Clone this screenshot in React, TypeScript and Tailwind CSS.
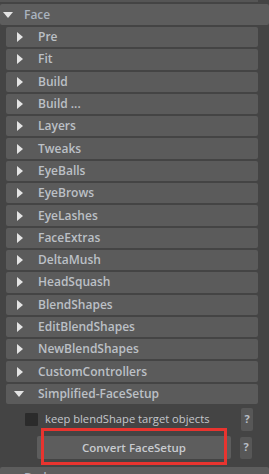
const sections = [
  "Pre",
  "Fit",
  "Build",
  "Build ...",
  "Layers",
  "Tweaks",
  "EyeBalls",
  "EyeBrows",
  "EyeLashes",
  "FaceExtras",
  "DeltaMush",
  "HeadSquash",
  "BlendShapes",
  "EditBlendShapes",
  "NewBlendShapes",
  "CustomControllers",
]

function RightTri() {
  return (
    <span className="block w-0 h-0 border-y-[5px] border-y-transparent border-l-[6px] border-l-[#e4e4e4]" />
  )
}

function DownTri() {
  return (
    <span className="block w-0 h-0 border-x-[5px] border-x-transparent border-t-[6px] border-t-[#e4e4e4]" />
  )
}

function HelpBox({ className }: { className: string }) {
  return (
    <div
      className={`w-[12px] flex items-center justify-center rounded-[2px] bg-[#575757] text-[#b8bec6] text-[11px] font-bold ${className}`}
    >
      ?
    </div>
  )
}

export default function App() {
  return (
    <div
      className="relative w-[269px] h-[474px] overflow-hidden bg-[#444444] text-[#bcc0c6]"
      style={{ fontFamily: '"Open Sans", "Liberation Sans", sans-serif' }}
    >
      {/* previous frame bottom edge */}
      <div className="h-[2px] w-[258px] bg-[#555555]" />
      <div className="h-[2px]" />

      {/* Face header */}
      <div className="h-[21px] flex items-center bg-[#5d5d5d] rounded-[2px]">
        <div className="w-[24px] pl-[3px] flex items-center">
          <DownTri />
        </div>
        <span className="text-[12px] font-semibold text-[#aab3bf]">Face</span>
      </div>

      <div className="pl-[6px] pr-[11px] pt-[2px] flex flex-col gap-[2px]">
        {sections.map((name) => (
          <div
            key={name}
            className="h-[20.3px] flex items-center bg-[#5b5b5b] rounded-[2px]"
          >
            <div className="w-[32px] pl-[11px] flex items-center">
              <RightTri />
            </div>
            <span className="text-[12px] font-semibold">{name}</span>
          </div>
        ))}

        <div className="h-[20.3px] flex items-center bg-[#5b5b5b] rounded-[2px]">
          <div className="w-[32px] pl-[8px] flex items-center">
            <DownTri />
          </div>
          <span className="text-[12px] font-semibold">Simplified-FaceSetup</span>
        </div>
      </div>

      {/* expanded content */}
      <div className="pr-[16px]">
        <div className="mt-[4px] h-[23px] flex items-center">
          <div className="ml-[25px] w-[13px] h-[13px] bg-[#2b2b2b] rounded-[1px]" />
          <span className="ml-[7px] text-[11.2px] text-[#c4c7cc]">keep blendShape target objects</span>
          <HelpBox className="ml-auto h-[23px]" />
        </div>
        <div className="mt-[5px] h-[23px] flex items-center">
          <div className="ml-[37px] w-[194px] h-[23px] flex items-center justify-center bg-[#5d5d5d] rounded-[2px] text-[11.5px] font-semibold text-[#c8cbd0]">
            Convert FaceSetup
          </div>
          <HelpBox className="ml-auto mr-[1px] h-[22px]" />
        </div>
      </div>

      {/* red annotation */}
      <div className="absolute left-[41px] top-[428px] w-[186px] h-[37px] border-[3px] border-[#e8342f]" />

      {/* next header, cut off */}
      <div className="mt-[8px] h-[21px] flex items-center bg-[#5d5d5d] rounded-[2px]">
        <div className="w-[24px] pl-[3px] flex items-center">
          <DownTri />
        </div>
        <span className="text-[12px] font-semibold text-[#aab3bf]">Body</span>
      </div>
    </div>
  )
}
